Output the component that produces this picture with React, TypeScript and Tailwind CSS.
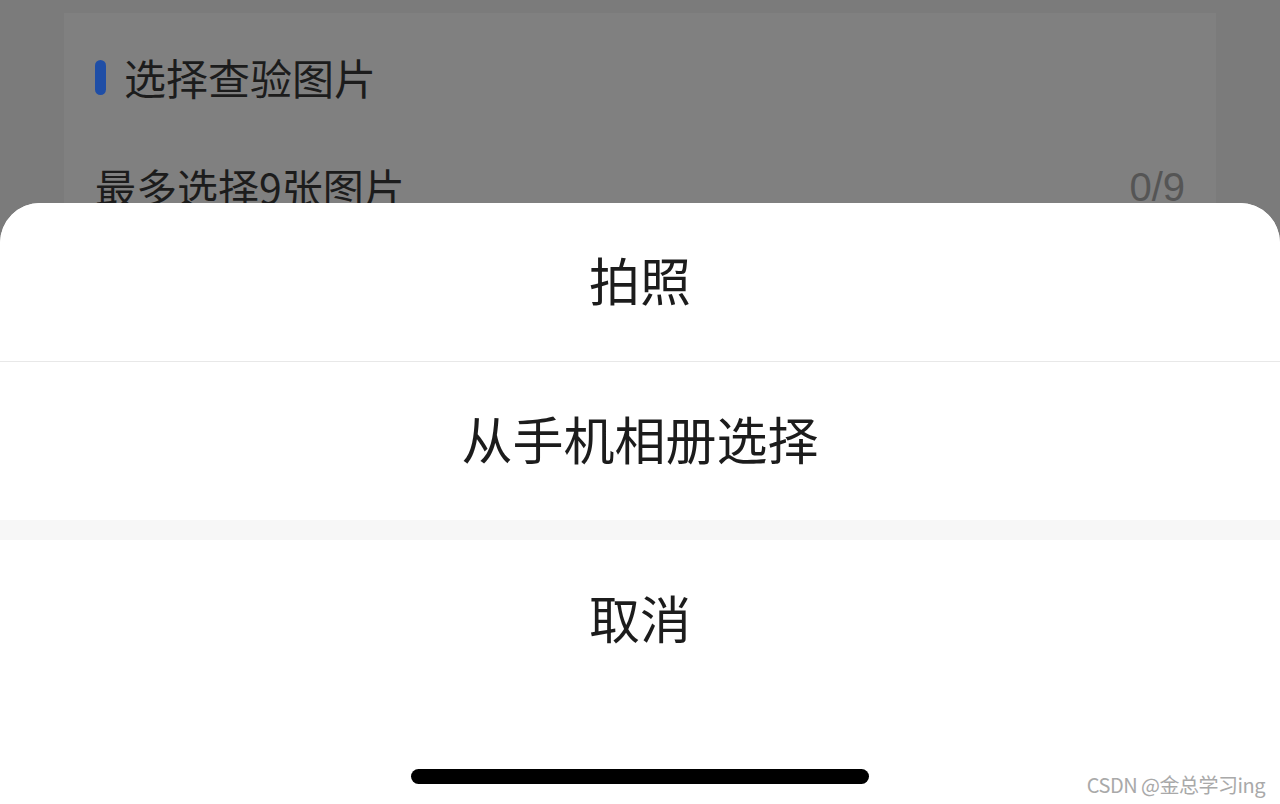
const sheetText = "text-[51px] leading-none text-[#1c1c1c]";

function SheetItem({ label }: { label: string }) {
  return (
    <button className="flex h-[158px] w-full items-center justify-center bg-white pb-[6px]">
      <span className={sheetText}>{label}</span>
    </button>
  );
}

export default function App() {
  return (
    <div
      className="relative h-[804px] w-[1280px] overflow-hidden bg-[#7b7b7b]"
      style={{ fontFamily: '"Noto Sans CJK SC", "Noto Sans", sans-serif' }}
    >
      {/* page behind the overlay */}
      <div className="px-[64px] pt-[13px]">
        <div className="h-[400px] bg-[#808080] px-[31px] pt-[43px]">
          <div className="flex items-center gap-[18px]">
            <div className="h-[35px] w-[11px] rounded-full bg-[#1f4ea6]" />
            <span className="text-[42px] leading-none text-[#1c1c1c]">选择查验图片</span>
          </div>
          <div className="mt-[68px] flex items-center justify-between">
            <span className="text-[41px] leading-none text-[#1c1c1c]">最多选择9张图片</span>
            <span
              className="text-[40px] leading-none text-[#555555]"
              style={{ fontFamily: '"Liberation Sans", Arial, sans-serif' }}
            >
              0/9
            </span>
          </div>
        </div>
      </div>

      {/* action sheet */}
      <div className="absolute inset-x-0 bottom-0 flex h-[601px] flex-col overflow-hidden rounded-t-[40px] bg-white">
        <SheetItem label="拍照" />
        <div className="h-px bg-[#e8e8e8]" />
        <SheetItem label="从手机相册选择" />
        <div className="h-[20px] bg-[#f7f7f7]" />
        <button className="flex h-[160px] w-full items-center justify-center bg-white pb-[6px]">
          <span className={sheetText}>取消</span>
        </button>
        <div className="flex flex-1 justify-center pt-[69px]">
          <div className="h-[15px] w-[458px] rounded-full bg-black" />
        </div>
      </div>

      <div className="absolute bottom-[9px] right-[15px] text-[20px] leading-none tracking-[-0.5px] text-[#a9a9a9]">
        CSDN @金总学习ing
      </div>
    </div>
  );
}
